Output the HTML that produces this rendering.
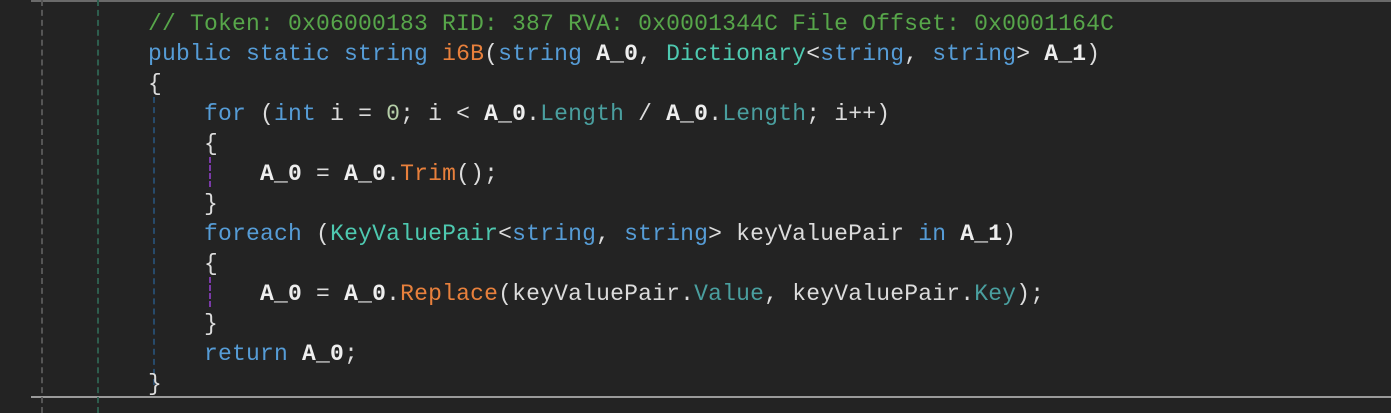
<!DOCTYPE html>
<html><head><style>
html,body{margin:0;padding:0;background:#232323;width:1391px;height:413px;overflow:hidden;position:relative}
.code{position:absolute;left:148px;top:9px;font-family:"Liberation Mono",monospace;font-size:23px;letter-spacing:0.2px;line-height:30px;color:#dcdcdc;white-space:pre}
.c{color:#57a64a}.k{color:#569cd6}.t{color:#4ec9b0}.m{color:#e8803c}.p{color:#4a9f9f}.n{color:#b5cea8}.b{font-weight:bold;color:#eee}
.g{position:absolute;width:0;border-left:2px dashed}
.hl{position:absolute;left:31px;right:0;height:2px;background:#6a6a6a}
</style></head><body>
<div class="hl" style="top:0"></div>
<div class="hl" style="top:396px;background:#9a9a9a"></div>
<div class="g" style="left:41px;top:0;height:413px;border-color:#555"></div>
<div class="g" style="left:97px;top:0;height:413px;border-color:#2e5e4e"></div>
<div class="g" style="left:153px;top:97px;height:288px;border-color:#274a6a"></div>
<div class="g" style="left:209px;top:157px;height:30px;border-color:#7a3aa8"></div>
<div class="g" style="left:209px;top:277px;height:30px;border-color:#7a3aa8"></div>
<div class="code"><span class="c">// Token: 0x06000183 RID: 387 RVA: 0x0001344C File Offset: 0x0001164C</span>
<span class="k">public static string</span> <span class="m">i6B</span>(<span class="k">string</span> <span class="b">A_0</span>, <span class="t">Dictionary</span>&lt;<span class="k">string</span>, <span class="k">string</span>&gt; <span class="b">A_1</span>)
{
    <span class="k">for</span> (<span class="k">int</span> i = <span class="n">0</span>; i &lt; <span class="b">A_0</span>.<span class="p">Length</span> / <span class="b">A_0</span>.<span class="p">Length</span>; i++)
    {
        <span class="b">A_0</span> = <span class="b">A_0</span>.<span class="m">Trim</span>();
    }
    <span class="k">foreach</span> (<span class="t">KeyValuePair</span>&lt;<span class="k">string</span>, <span class="k">string</span>&gt; keyValuePair <span class="k">in</span> <span class="b">A_1</span>)
    {
        <span class="b">A_0</span> = <span class="b">A_0</span>.<span class="m">Replace</span>(keyValuePair.<span class="p">Value</span>, keyValuePair.<span class="p">Key</span>);
    }
    <span class="k">return</span> <span class="b">A_0</span>;
}</div>
</body></html>
